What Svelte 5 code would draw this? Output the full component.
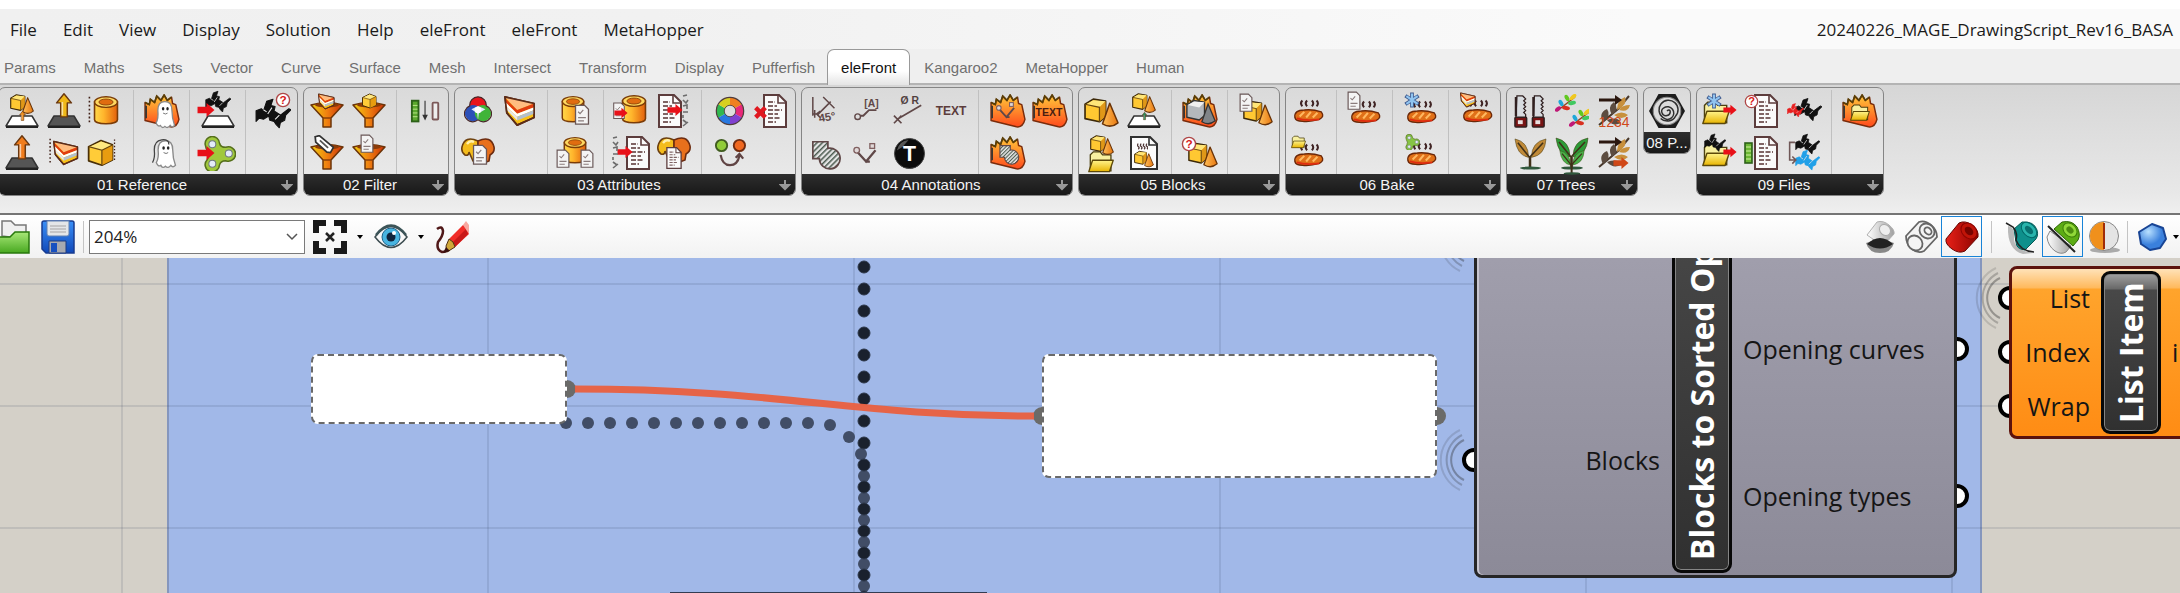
<!-- App.svelte -->
<script>
  // Menu and ribbon tabs
  const menus = ['File', 'Edit', 'View', 'Display', 'Solution', 'Help', 'eleFront', 'eleFront', 'MetaHopper'];
  const tabs = [
    'Params', 'Maths', 'Sets', 'Vector', 'Curve', 'Surface', 'Mesh', 'Intersect', 'Transform',
    'Display', 'Pufferfish', 'eleFront', 'Kangaroo2', 'MetaHopper', 'Human'
  ];
  let activeTab = $state('eleFront');
  let zoomLevel = $state('204%');
  let preview = $state('shaded');
  let drawMode = $state('selected');

  // An icon is a label and a list of parts: [symbol, x, y, size, colour]
  const icon = (label, ...parts) => ({ label, parts });

  // Every group is a list of columns, every column has one or two icons
  const panels = [
    {
      title: '01 Reference',
      groups: [
        [
          [icon('Reference geometry', ['plate', 0, 0, 34, '#ffffff'], ['blocks', 5, -2, 24], ['up', 12, 17, 11, '#f09020']),
           icon('Reference by layer', ['plate', 0, 0, 34, '#555555'], ['up', 3, -1, 28, '#f07c1c'])],
          [icon('Reference by name', ['plate', 0, 0, 34, '#555555'], ['up', 3, -1, 28, '#f0b818']),
           icon('Reference by key', ['cake', 6, 4, 26], ['dotline', -1, 1, 28])],
          [icon('Reference curve', ['cylinder', 2, 1, 30], ['dotline', -4, 1, 30]),
           icon('Reference box', ['cube', -3, 1, 30], ['dotline', 22, 2, 24, '#a02020'])]
        ],
        [
          [icon('Baked ghosts', ['flame', -1, 0, 36], ['ghost', 4, 5, 30]), icon('Ghost', ['ghost', 4, 2, 31], ['ghostedge', 2, 2, 31])]
        ],
        [
          [icon('Import to document', ['plate', 0, 0, 34, '#ffffff'], ['cat', 4, -5, 26, '#111111'], ['right', -4, 7, 18]),
           icon('Spin', ['spinner', 0, 0, 35, '#a0c83c'], ['right', -4, 8, 18])]
        ],
        [[icon('Unknown object', ['cat', -2, 2, 36, '#111111'], ['ask', 18, -2, 16])]]
      ]
    },
    {
      title: '02 Filter',
      groups: [
        [
          [icon('Filter by attribute', ['funnel', 0, 0, 34], ['cake', 8, -1, 17]), icon('Filter by name', ['funnel', 0, 0, 34], ['tag', 4, -1, 20])],
          [icon('Filter by type', ['funnel', 0, 0, 34], ['cube', 9, -2, 17]), icon('Filter by text', ['funnel', 0, 0, 34], ['page', 5, -2, 20])]
        ],
        [[icon('Compare values', ['bars', 2, 2, 32])]]
      ]
    },
    {
      title: '03 Attributes',
      groups: [
        [
          [icon('Colour', ['rgb', 3, 2, 28]), icon('Material attributes', ['helmet', 0, 0, 34], ['page', 8, 8, 22])],
          [icon('Attributes', ['cake', 1, 1, 32])]
        ],
        [[icon('Curve attributes', ['cylinder', 0, 1, 28], ['page', 12, 10, 22]), icon('Attribute pair', ['cylinder', 2, 0, 28], ['page', -6, 13, 20], ['page', 18, 13, 20])]],
        [
          [icon('Set attribute', ['cylinder', 4, 0, 30], ['page', -5, 8, 18], ['right', -1, 12, 14]), icon('Import keys', ['doc', 6, 0, 34], ['right', 2, 8, 16], ['code', -6, 0, 34])],
          [icon('Export keys', ['doc', -4, 0, 34], ['right', 10, 8, 16], ['code', 22, 0, 34]), icon('Material document', ['helmet', 0, -1, 34], ['doc', 6, 11, 22])]
        ],
        [
          [icon('Colour wheel', ['wheel', 2, 2, 30]), icon('Swap attributes', ['swap', 1, 1, 32])],
          [icon('Delete attributes', ['doc', 3, 0, 34], ['cross', -2, 11, 15])]
        ]
      ]
    },
    {
      title: '04 Annotations',
      groups: [
        [
          [icon('Angular dimension', ['angle', 2, 2, 32]), icon('Hatch', ['hatch', 2, 2, 32])],
          [icon('Leader', ['leader', 2, 2, 32]), icon('Polyline', ['poly', 2, 2, 32])],
          [icon('Radial dimension', ['radial', 1, 1, 32]), icon('Text dot', ['textdot', 1, 1, 33])],
          [icon('Text', ['text', 0, 0, 34, '#5c3c3c'])]
        ],
        [
          [icon('Bake leader', ['flame', 0, 0, 36], ['poly', 5, 4, 26]), icon('Bake hatch', ['flame', 0, 0, 36], ['hatch', 8, 7, 22])],
          [icon('Bake text', ['flame', 0, 0, 36], ['text', 2, 3, 30, '#4a1e12'])]
        ]
      ]
    },
    {
      title: '05 Blocks',
      groups: [
        [
          [icon('Block', ['blocks', -1, 1, 35]), icon('Block library', ['folder', 3, 12, 26], ['blocks', 5, -3, 24])],
          [icon('Place block', ['plate', 0, 0, 34, '#ffffff'], ['blocks', 5, -3, 24], ['up', 13, 18, 9, '#2c8a58']), icon('Block definition', ['sheet', 0, 0, 34], ['steam', 10, 7, 11], ['blocks', 7, 13, 20])]
        ],
        [[icon('Bake block', ['flame', -1, 0, 36], ['greyblocks', 3, 3, 30]), icon('Block info', ['blocks', 5, 4, 30], ['ask', -2, 0, 16])]],
        [[icon('Block attributes', ['blocks', 4, 4, 30], ['page', -3, -1, 20])]]
      ]
    },
    {
      title: '06 Bake',
      groups: [
        [[icon('Bake', ['bread', 1, 0, 32]), icon('Bake to folder', ['bread', 1, 2, 32], ['folder', -1, -2, 15])]],
        [[icon('Bake document', ['bread', 2, 1, 32], ['page', -4, -3, 20])]],
        [[icon('Bake frozen', ['bread', 2, 1, 32], ['snow', 0, -2, 16]), icon('Bake live', ['bread', 2, 1, 32], ['spinner', 0, -2, 16, '#86c444'])]],
        [[icon('Bake attributes', ['bread', 2, 0, 32], ['cake', 0, -2, 16])]]
      ]
    },
    {
      title: '07 Trees',
      groups: [
        [
          [icon('Prune', ['saws', 1, 1, 33]), icon('Sprout', ['sprout', 1, 1, 33, '#c08a38'])],
          [icon('Colour leaves', ['leaves', 0, 0, 34]), icon('Grow', ['sprout', 0, 0, 34, '#2c9c38'], ['sprout', 4, 13, 26, '#48b048'])],
          [icon('Number branches', ['branch', 0, 0, 34], ['digits', 0, 0, 34]), icon('Shift branches', ['branch', 0, 0, 34], ['right', 16, 19, 16, '#d04818'])]
        ]
      ]
    },
    { title: '08 P...', small: true, groups: [[[icon('Spiral', ['nut', -1, -1, 36])]]] },
    {
      title: '09 Files',
      groups: [
        [
          [icon('New file', ['folder', -1, 4, 28], ['snow', 3, -1, 16], ['right', 20, 9, 14]), icon('Open file', ['folder', -1, 4, 28], ['cat', 1, -4, 22, '#111111'], ['right', 20, 9, 14])],
          [icon('File info', ['doc', 4, 0, 34], ['ask', -1, 0, 15]), icon('File contents', ['doc', 4, 0, 34], ['greenbar', -1, 0, 34])],
          [icon('Replace object', ['cat', 7, 2, 28, '#111111'], ['cat', 0, 8, 17, '#e82020']), icon('Copy object', ['cat', 8, -4, 25, '#111111'], ['cat', 8, 12, 25, '#20a0e8'], ['hook', 0, 2, 30])]
        ],
        [[icon('Bake file', ['flame', -1, 0, 36], ['folder', 7, 8, 20])]]
      ]
    }
  ];

  // Dotted relationship wires on the canvas
  const darkDots = Array.from({ length: 16 }, (_, i) => [864, 9 + i * 22]);
  const softDots = [
    ...Array.from({ length: 12 }, (_, i) => [566 + i * 22, 165]),
    [830, 167], [849, 179], [861, 196],
    ...Array.from({ length: 6 }, (_, i) => [864, 218 + i * 22])
  ];

  // Wireless input marks: centre of the port
  const wireless = [[1474, -17], [1474, 202], [2010, 40]];
  const ports = [[1474, 202], [1957, 91], [1957, 238], [2010, 40], [2010, 94], [2010, 148]];
</script>

<!-- Shared drawings for the icons -->
<svg class="library" width="0" height="0" aria-hidden="true">
  <defs>
    <linearGradient id="gold"><stop offset="0" stop-color="#ffd94a" /><stop offset=".4" stop-color="#ffb52c" /><stop offset="1" stop-color="#e2600c" /></linearGradient>
    <linearGradient id="fire" x2="0" y2="1"><stop offset="0" stop-color="#ffc83a" /><stop offset="1" stop-color="#ff4a1c" /></linearGradient>
    <linearGradient id="cone"><stop offset="0" stop-color="#ffc05a" /><stop offset="1" stop-color="#e87810" /></linearGradient>
    <linearGradient id="funnelfill"><stop offset="0" stop-color="#f0d010" /><stop offset=".5" stop-color="#f08010" /><stop offset="1" stop-color="#c83008" /></linearGradient>
    <linearGradient id="yellow" x2="0" y2="1"><stop offset="0" stop-color="#fff48c" /><stop offset="1" stop-color="#e8b400" /></linearGradient>
    <radialGradient id="ball" cx=".35" cy=".3"><stop offset="0" stop-color="#b8e0ff" /><stop offset="1" stop-color="#3a80dc" /></radialGradient>
    <linearGradient id="redfill"><stop offset="0" stop-color="#e82018" /><stop offset="1" stop-color="#8c0400" /></linearGradient>
    <linearGradient id="greyfill"><stop offset="0" stop-color="#ffffff" /><stop offset="1" stop-color="#a0a0a0" /></linearGradient>
    <linearGradient id="bluefill" x2="0" y2="1"><stop offset="0" stop-color="#3a90f8" /><stop offset="1" stop-color="#1048b8" /></linearGradient>
    <linearGradient id="greenfill" x2="0" y2="1"><stop offset="0" stop-color="#a8e878" /><stop offset="1" stop-color="#48a820" /></linearGradient>
    <pattern id="stripes" width="4" height="4" patternUnits="userSpaceOnUse" patternTransform="rotate(45)">
      <rect width="4" height="4" fill="#e4e4e4" /><rect width="1.6" height="4" fill="#4c5c50" />
    </pattern>

    <symbol id="plate" viewBox="0 0 34 34"><path d="M7 22h20l6 10H1z" fill="currentColor" stroke="#333" stroke-width="1.5" stroke-linejoin="round" /><path d="M1 33h32" stroke="#222" stroke-width="2" /></symbol>
    <symbol id="up" viewBox="0 0 34 34"><path d="M17 1l9 11h-5v17h-8V12H8z" fill="currentColor" stroke="#6a3810" stroke-width="1.8" stroke-linejoin="round" /><path d="M15 11v16" stroke="#fff" stroke-opacity=".6" stroke-width="2" /></symbol>
    <symbol id="right" viewBox="0 0 34 34"><path d="M1 11h17V4l15 13-15 13v-7H1z" fill="currentColor" /></symbol>
    <symbol id="cross" viewBox="0 0 34 34"><path d="M6 6l22 22M28 6L6 28" stroke="#e01820" stroke-width="10" /></symbol>
    <symbol id="dotline" viewBox="0 0 34 34"><path d="M5 2v30" stroke="#402018" stroke-width="1.8" stroke-dasharray="2 2.5" /></symbol>
    <symbol id="cube" viewBox="0 0 34 34"><path d="M3 11L17 4l13 5v17l-12 6-15-5z" fill="#ffcc38" stroke="#4a3008" stroke-width="2" stroke-linejoin="round" /><path d="M4 11l14 4 11-6-12-4z" fill="#ffe880" /><path d="M18 15l12-6v17l-12 6z" fill="#e89c10" /><path d="M3 11l15 4v17M18 15l12-6" fill="none" stroke="#6a4810" stroke-width="1.4" /></symbol>
    <symbol id="blocks" viewBox="0 0 34 34"><path d="M1 9l8-5 12 2v15l-6 5-14-3z" fill="#ffc832" stroke="#3c2808" stroke-width="1.6" stroke-linejoin="round" /><path d="M2 9l13 3 6-6-12-1z" fill="#ffe678" /><path d="M15 12l6-6v15l-6 5z" fill="#e09818" /><path d="M1 9l14 3v14" fill="none" stroke="#6a4810" stroke-width="1.2" /><path d="M25 8l8 19q-7 6-15 1z" fill="url(#cone)" stroke="#6a3408" stroke-width="1.5" stroke-linejoin="round" /></symbol>
    <symbol id="greyblocks" viewBox="0 0 34 34"><path d="M1 9l8-5 12 2v15l-6 5-14-3z" fill="#b4b8bc" stroke="#333" stroke-width="1.6" stroke-linejoin="round" /><path d="M2 9l13 3 6-6-12-1z" fill="#f0f0f0" /><path d="M25 8l8 19q-7 6-15 1z" fill="#808488" stroke="#333" stroke-width="1.5" /></symbol>
    <symbol id="cylinder" viewBox="0 0 34 34"><path d="M4 8v20c0 6 26 6 26 0V8z" fill="url(#gold)" stroke="#7a3c08" stroke-width="1.8" /><ellipse cx="17" cy="8" rx="13" ry="6" fill="#ffd860" stroke="#7a3c08" stroke-width="1.6" /><ellipse cx="17" cy="8" rx="8" ry="3.4" fill="#e06c10" stroke="#8a4408" /></symbol>
    <symbol id="cake" viewBox="0 0 34 34"><path d="M1 2l31 7v15l-18 8L3 19z" fill="#f8c018" stroke="#5c2c18" stroke-width="1.8" stroke-linejoin="round" /><path d="M1 2l31 7-18 7z" fill="#ffbc80" /><path d="M1 3l13 13 18-7v4l-18 7L2 8z" fill="#e03c10" /><path d="M2 8l12 12 18-7v3l-18 7L2 12z" fill="#fff" /><path d="M14 23l18-7v4l-18 7z" fill="#b4c0cc" /><path d="M2 12l12 11v4L3 16z" fill="#e8e8e8" /><path d="M1 2l31 7v15l-18 8L3 19z" fill="none" stroke="#5c2c18" stroke-width="1.8" stroke-linejoin="round" /></symbol>
    <symbol id="flame" viewBox="0 0 34 34"><path d="M1 8l4 2 1-5 4 3 2-6 4 4 3-5 3 5 4-3 1 6 3 1 3 14q-2 8-8 7L1 25z" fill="url(#fire)" stroke="#7a2c0c" stroke-width="1.4" stroke-linejoin="round" /><path d="M1 8l4 2 1-5 4 3 2-6 4 4 3-5 3 5 4-3" fill="none" stroke="#5a4008" stroke-width="1.6" /><path d="M2 11v12" stroke="#333" stroke-width="1.6" /></symbol>
    <symbol id="ghost" viewBox="0 0 34 34"><path d="M8 27q3-5 2-14Q10 3 18 3t8 10q0 9 3 17-3 3-5 0-3 4-6 1-3 3-5-1-3 2-5-3z" fill="#fff" stroke="#8a8a8a" stroke-width="1.5" /><ellipse cx="16" cy="11" rx="1.4" ry="2" fill="#222" /><ellipse cx="21" cy="11" rx="1.4" ry="2" fill="#222" /><path d="M16 16q3 2 5 0" fill="none" stroke="#666" /></symbol>
    <symbol id="ghostedge" viewBox="0 0 34 34"><path d="M6 27q3-5 2-14Q8 3 16 2t8 5" fill="none" stroke="#444" stroke-width="1.4" /></symbol>
    <symbol id="cat" viewBox="0 0 34 34"><path d="M1 14l5-2 2 2 3-9 6-2-2 6 4 1-1 4 6 4 8-6 2 1-5 5-1 5-4 2-1 5-3-3-2-3-4-1-1-4-5 3-4-1-3 3z" fill="currentColor" stroke="currentColor" stroke-linejoin="round" /><path d="M12 17l4-6M19 22l4-4M8 13l3 2" stroke="#e8e8e8" stroke-width="1" /></symbol>
    <symbol id="ask" viewBox="0 0 34 34"><circle cx="17" cy="17" r="14" fill="#fff" stroke="#b04848" stroke-width="3" /><text x="17" y="26" text-anchor="middle" font-family="Liberation Sans, sans-serif" font-size="25" font-weight="700" fill="#d81818">?</text></symbol>
    <symbol id="spinner" viewBox="0 0 34 34"><path d="M4 8a7 7 0 0 1 14-1q1 4 6 4a7 7 0 1 1 0 13q-5 0-6 4a7 7 0 1 1-12-5q3-5-1-11z" fill="currentColor" stroke="#56701c" stroke-width="1.5" /><g fill="#e4ecf8" stroke="#707880"><circle cx="11" cy="8" r="3.4" /><circle cx="27" cy="17" r="3.4" /><circle cx="11" cy="27" r="3.4" /></g></symbol>
    <symbol id="funnel" viewBox="0 0 34 34"><path d="M1 11q16-5 32 0L21 24v9h-8v-9z" fill="url(#funnelfill)" stroke="#6c3408" stroke-width="1.5" stroke-linejoin="round" /><ellipse cx="17" cy="11" rx="12" ry="2.5" fill="#8c3c08" /><path d="M13 24h8" stroke="#8c4008" stroke-width="1.4" /></symbol>
    <symbol id="tag" viewBox="0 0 34 34"><path d="M2 3l7-2 24 20-5 9-6-1L3 12z" fill="#fff" stroke="#333" stroke-width="3" /><path d="M10 9l14 13" stroke="#555" stroke-width="3" /></symbol>
    <symbol id="page" viewBox="0 0 34 34"><path d="M7 2h14l6 6v23H7z" fill="#f4f4f4" stroke="#6a5858" stroke-width="2" /><path d="M11 12l3 3 5-6M11 21h12M11 26h9" fill="none" stroke="#8a7c7c" stroke-width="1.8" /></symbol>
    <symbol id="doc" viewBox="0 0 34 34"><path d="M6 1h15l7 7v25H6z" fill="#fafafa" stroke="#5c3c3c" stroke-width="2" /><path d="M20 1v8h8" fill="none" stroke="#5c3c3c" stroke-width="1.6" /><path d="M10 8h7M10 12h9M10 16h14M10 20h10M10 24h13M10 28h8" stroke="#806464" stroke-width="1.8" stroke-dasharray="5 1.5" /></symbol>
    <symbol id="sheet" viewBox="0 0 34 34"><path d="M4 1h19l7 7v25H4z" fill="#fcfcfc" stroke="#303030" stroke-width="2" /><path d="M22 1v8h8" fill="none" stroke="#303030" stroke-width="1.6" /></symbol>
    <symbol id="code" viewBox="0 0 34 34"><path d="M4 2l4-1M4 6l3 3 2-3M4 12l4-1v4M4 18h5M4 21v3M4 26l4 3M4 32l5-4" fill="none" stroke="#6c6c6c" stroke-width="1.6" /></symbol>
    <symbol id="bars" viewBox="0 0 34 34"><rect x="2" y="5" width="7" height="22" fill="#5aa82c" stroke="#2c6018" stroke-width="2" /><path d="M3 10h5M3 14h5M3 18h5M3 22h5" stroke="#c0e890" /><path d="M16 5v17" stroke="#777" stroke-width="2" /><path d="M13 20l3 6 3-6z" fill="#333" /><rect x="24" y="7" width="6" height="18" rx="1" fill="#eee" stroke="#7c5858" stroke-width="2" /></symbol>
    <symbol id="greenbar" viewBox="0 0 34 34"><rect x="1" y="7" width="7" height="20" fill="#6cb834" stroke="#2c6018" stroke-width="1.6" /><path d="M2 11h5M2 15h5M2 19h5M2 23h5" stroke="#d0f0a0" /></symbol>
    <symbol id="rgb" viewBox="0 0 34 34"><circle cx="17" cy="11" r="10" fill="#e8141c" /><circle cx="11" cy="21" r="10" fill="#2c50b8" /><circle cx="23" cy="21" r="10" fill="#40b438" /><path d="M17 12l-8 4 7 5 1 8 1-8 8-5z" fill="#dfe8ff" /><circle cx="17" cy="17" r="4" fill="#fff" /><path d="M17 1a10 10 0 0 1 10 11 10 10 0 1 1-10 17 10 10 0 1 1-10-17A10 10 0 0 1 17 1z" fill="none" stroke="#482828" stroke-width="1.4" /></symbol>
    <symbol id="helmet" viewBox="0 0 34 34"><path d="M17 5Q4-1 1 11q-1 5 3 8 4 1 4-3l4 9h5z" fill="#f4bc1c" stroke="#6c4010" stroke-width="1.6" /><path d="M17 5q13-6 16 6 1 5-4 8l-1 6-5 2-6-2z" fill="#e8701c" stroke="#6c2c10" stroke-width="1.6" /><path d="M6 8q3-4 7-2" stroke="#fff0b0" stroke-width="2.4" fill="none" /></symbol>
    <symbol id="wheel" viewBox="0 0 34 34"><g fill="none" stroke-width="9"><path d="M17 6a11 11 0 0 1 9.5 5.5" stroke="#f08020" /><path d="M26.5 11.5a11 11 0 0 1 0 11" stroke="#e82878" /><path d="M26.5 22.5A11 11 0 0 1 17 28" stroke="#8040d0" /><path d="M17 28a11 11 0 0 1-9.5-5.5" stroke="#2878e0" /><path d="M7.5 22.5a11 11 0 0 1 0-11" stroke="#30b850" /><path d="M7.5 11.5A11 11 0 0 1 17 6" stroke="#d8d020" /></g><circle cx="17" cy="17" r="15.5" fill="none" stroke="#503c3c" stroke-width="1.4" /><circle cx="17" cy="17" r="6.5" fill="none" stroke="#504040" /></symbol>
    <symbol id="swap" viewBox="0 0 34 34"><circle cx="8" cy="9" r="6" fill="#90cc38" stroke="#405c20" stroke-width="2" /><circle cx="27" cy="9" r="6" fill="#f06820" stroke="#702c10" stroke-width="2" /><path d="M7 19q2 11 10 11t10-10M23 22l4-4 4 5" fill="none" stroke="#604444" stroke-width="2.4" /></symbol>
    <symbol id="angle" viewBox="0 0 34 34"><path d="M3 1v20M3 19h6l13-13M14 1l12 12M5 15v8M7 19l4-3M7 19l4 4" fill="none" stroke="#604848" stroke-width="1.6" /><text x="10" y="28" font-family="Liberation Sans, sans-serif" font-size="12" font-weight="700" fill="#604848" transform="rotate(-10 10 28)">45°</text></symbol>
    <symbol id="leader" viewBox="0 0 34 34"><circle cx="6" cy="22" r="3" fill="#ddd" stroke="#604848" stroke-width="1.5" /><path d="M9 21h3l6-6h8" fill="none" stroke="#604848" stroke-width="2" /><text x="13" y="12" font-family="Liberation Sans, sans-serif" font-size="11" font-weight="700" fill="#604848">[A]</text></symbol>
    <symbol id="poly" viewBox="0 0 34 34"><path d="M5 14l10 11 10-12M14 25h5" fill="none" stroke="#604848" stroke-width="2.4" /><circle cx="5" cy="13" r="3" fill="#e0d8d8" stroke="#806060" stroke-width="1.4" /><rect x="19" y="6" width="5" height="5" fill="#e0d8d8" stroke="#806060" stroke-width="1.4" /></symbol>
    <symbol id="radial" viewBox="0 0 34 34"><path d="M4 26L30 11M1 22l8 8M9 22l-8 8" stroke="#604848" stroke-width="1.8" /><text x="8" y="10" font-family="Liberation Sans, sans-serif" font-size="11" font-weight="700" fill="#504040">Ø R</text></symbol>
    <symbol id="text" viewBox="0 0 34 34"><text x="17" y="21" text-anchor="middle" font-family="Liberation Sans, sans-serif" font-size="12" font-weight="700" fill="currentColor">TEXT</text></symbol>
    <symbol id="hatch" viewBox="0 0 34 34"><path d="M3 4h16v7a11 11 0 1 1-9 11H3z" fill="url(#stripes)" stroke="#604848" stroke-width="1.8" /></symbol>
    <symbol id="textdot" viewBox="0 0 34 34"><circle cx="17" cy="17" r="15.5" fill="#0c0c0c" stroke="#444" /><path d="M4 14Q6 4 16 3L10 10z" fill="#888" opacity=".6" /><text x="17" y="25" text-anchor="middle" font-family="Liberation Sans, sans-serif" font-size="22" font-weight="700" fill="#fff">T</text></symbol>
    <symbol id="steam" viewBox="0 0 34 34"><path d="M4 2q-5 5 0 9t0 8M13 2q-5 5 0 9t0 8M22 2q-5 5 0 9t0 8M31 2q-5 5 0 9t0 8" fill="none" stroke="#503838" stroke-width="4" /></symbol>
    <symbol id="bread" viewBox="0 0 34 34"><path d="M10 7q-3 3 0 6M15 7q-3 3 0 6M20 7q3 3 0 6M25 7q3 3 0 6" fill="none" stroke="#402424" stroke-width="2.2" /><path d="M2 25q-1-8 10-8 9-1 18 2 4 5-2 8-10 3-18 2-7 0-8-4z" fill="#e07018" stroke="#6c2808" stroke-width="1.5" /><path d="M7 24l5-5M14 25l5-6M21 25l5-5" stroke="#ffb860" stroke-width="2.2" /><path d="M4 26q10 3 24 1" stroke="#e02c10" stroke-width="2" fill="none" /></symbol>
    <symbol id="snow" viewBox="0 0 34 34"><path d="M17 1v32M3 8l28 18M31 8L3 26" stroke="#405c90" stroke-width="8" /><path d="M17 3v28M5 9l24 16M29 9L5 25" stroke="#90c4f0" stroke-width="4.5" /></symbol>
    <symbol id="folder" viewBox="0 0 34 34"><path d="M3 30V9l4-4h9l3 4h11v21z" fill="#f8f0a0" stroke="#4c4010" stroke-width="1.7" /><path d="M1 31l5-15h27l-5 15z" fill="url(#yellow)" stroke="#5c4808" stroke-width="1.7" stroke-linejoin="round" /></symbol>
    <symbol id="saws" viewBox="0 0 34 34"><g id="saw" stroke="#302020"><path d="M3 1h6l3 3-2 2 2 2-2 2 2 2-2 2 2 2-2 2 2 2v4H2z" fill="#d8dce0" stroke-width="1.3" /><path d="M2 2v20" stroke-width="2.4" /><rect x="1" y="23" width="12" height="10" rx="1" fill="#781414" stroke-width="1.6" /><rect x="4" y="26" width="5" height="4" fill="#e8e0e0" stroke="none" /></g><use href="#saw" x="18" /></symbol>
    <symbol id="sprout" viewBox="0 0 34 34"><path d="M15 21Q3 19 1 2q14 3 14 19zM18 21q0-16 15-19-1 17-15 19z" fill="currentColor" stroke="#403810" stroke-opacity=".5" /><path d="M4 6l12 15v11M30 6L17 20v12" stroke="#403018" stroke-width="1.6" fill="none" /><ellipse cx="17" cy="32" rx="11" ry="1.6" fill="#30583c" /></symbol>
    <symbol id="leaves" viewBox="0 0 34 34"><g id="twig"><path d="M2 17L20 3" stroke="#904820" stroke-width="1.5" /><ellipse cx="3" cy="15" rx="3.5" ry="2" fill="#c01878" transform="rotate(-40 3 15)" /><ellipse cx="6" cy="9" rx="3.5" ry="2" fill="#20a8d8" transform="rotate(60 6 9)" /><ellipse cx="12" cy="4" rx="3.5" ry="2" fill="#60c820" transform="rotate(60 12 4)" /><ellipse cx="18" cy="3" rx="4" ry="2" fill="#f0c820" transform="rotate(-40 18 3)" /><ellipse cx="11" cy="14" rx="4" ry="2" fill="#d83020" transform="rotate(10 11 14)" /><ellipse cx="17" cy="9" rx="4" ry="2" fill="#40c860" transform="rotate(-10 17 9)" /></g><use href="#twig" x="14" y="15" /></symbol>
    <symbol id="branch" viewBox="0 0 34 34"><path d="M2 31L21 15 32 2" stroke="#48382c" stroke-width="2" fill="none" /><path d="M6 28q-5-9 4-13 5 7-4 13zM15 21q-5-8 2-13 6 7-2 13zM10 26q11-4 14 3-8 4-14-3z" fill="#5c4c40" /><path d="M20 16q0-10 8-13 3 8-8 13zM22 16q3-5 11-5-2 8-11 5zM17 21q8-5 14 0-6 6-14 0z" fill="#c8903c" /><path d="M2 6h18" stroke="#2c1810" stroke-width="3" /><path d="M18 1l7 5-7 5z" fill="#2c1810" /></symbol>
    <symbol id="digits" viewBox="0 0 34 34"><text x="17" y="33" text-anchor="middle" font-family="Liberation Sans, sans-serif" font-size="14" fill="#d04818">1234</text></symbol>
    <symbol id="nut" viewBox="0 0 34 34"><path d="M9 1h16l9 16-9 16H9L0 17z" fill="#1c1c1c" /><circle cx="17" cy="17" r="13" fill="#dcdcdc" stroke="#888" /><path d="M17 17q2-2 3 0a4 4 0 1 1-6-3 6 6 0 1 1-1 9 9 9 0 1 1 12-1 9 9 0 0 1-14 2" fill="none" stroke="#303030" stroke-width="1.4" /></symbol>
    <symbol id="hook" viewBox="0 0 34 34"><path d="M9 5H3v20h6M6 21l4 4-4 4" fill="none" stroke="#705858" stroke-width="1.8" /></symbol>
  </defs>
</svg>

{#snippet drawIcon(parts)}
  <svg class="icon" viewBox="0 0 34 34" aria-hidden="true">
    {#each parts as [name, x, y, size, colour = '#e81018']}
      <use href={`#${name}`} {x} {y} width={size} height={size} color={colour} />
    {/each}
  </svg>
{/snippet}

<div class="app">
  <header class="menu-bar">
    <nav aria-label="Menu">
      {#each menus as menu}
        <button type="button">{menu}</button>
      {/each}
    </nav>
    <span class="document">20240226_MAGE_DrawingScript_Rev16_BASA</span>
  </header>

  <div class="tabs" role="tablist">
    {#each tabs as tab}
      <button type="button" role="tab" class:active={tab === activeTab} aria-selected={tab === activeTab} onclick={() => (activeTab = tab)}>{tab}</button>
    {/each}
  </div>

  <div class="ribbon">
    {#each panels as panel}
      <section class="panel" class:small={panel.small}>
        <div class="groups">
          {#each panel.groups as group}
            <div class="group">
              {#each group as column}
                <div class="column">
                  {#each column as item}
                    <button type="button" aria-label={item.label}>{@render drawIcon(item.parts)}</button>
                  {/each}
                </div>
              {/each}
            </div>
          {/each}
        </div>
        <h2>
          <span>{panel.title}</span>
          {#if !panel.small}
            <svg width="12" height="12" viewBox="0 0 12 12" aria-hidden="true"><path d="M6 1v7M2 6h8L6 10z" fill="#999" stroke="#999" stroke-width="2" /></svg>
          {/if}
        </h2>
      </section>
    {/each}
  </div>

  <div class="toolbar">
    <button type="button" class="tool open" aria-label="Open file">
      <svg viewBox="0 0 34 34"><path d="M6 16V1h9l4 4h11v14z" fill="#f0f0f0" stroke="#777" stroke-width="1.5" /><path d="M1 33V17h13l5-5h14v21z" fill="url(#greenfill)" stroke="#28780c" stroke-width="1.5" /></svg>
    </button>
    <button type="button" class="tool save" aria-label="Save file">
      <svg viewBox="0 0 34 34"><path d="M1 3q0-2 2-2h28q2 0 2 2v30H5l-4-4z" fill="url(#bluefill)" stroke="#183c90" stroke-width="1.5" /><path d="M6 1h22v13q0 2-2 2H8q-2 0-2-2z" fill="#e4e6e8" stroke="#6080b0" /><path d="M9 6h16M9 9h16M9 12h16" stroke="#bbb" stroke-width="1.5" /><path d="M8 21h17v12H8z" fill="#a8aab0" stroke="#203c80" /><path d="M10 23h6v9h-6z" fill="#1850c0" /></svg>
    </button>
    <span class="divider"></span>
    <label class="zoom">
      <select aria-label="Zoom" bind:value={zoomLevel}>
        <option>50%</option>
        <option>100%</option>
        <option>204%</option>
      </select>
      <svg width="12" height="8" viewBox="0 0 12 8" aria-hidden="true"><path d="M1 1l5 5 5-5" fill="none" stroke="#555" stroke-width="1.5" /></svg>
    </label>
    <button type="button" class="tool" aria-label="Zoom extents">
      <svg viewBox="0 0 34 34"><path d="M3 13V3h10M21 3h10v10M31 21v10H21M13 31H3V21" fill="none" stroke="#1a1a1a" stroke-width="6" /><path d="M13 13l8 8M21 13l-8 8" stroke="#222" stroke-width="2.5" /></svg>
    </button>
    <button type="button" class="drop" aria-label="Zoom options"></button>
    <button type="button" class="tool" aria-label="Named views">
      <svg viewBox="0 0 34 34"><path d="M1 17Q17-4 33 17 17 38 1 17z" fill="#f8f8f8" stroke="#3c4c50" stroke-width="1.5" /><path d="M2 15Q17-4 32 15" fill="none" stroke="#3c5458" stroke-width="2.5" /><circle cx="17" cy="17" r="9" fill="#48b4e0" stroke="#1c6088" /><circle cx="17" cy="17" r="4.5" fill="#10243c" /><circle cx="20" cy="13" r="2" fill="#fff" /></svg>
    </button>
    <button type="button" class="drop" aria-label="View options"></button>
    <button type="button" class="tool" aria-label="Sketch">
      <svg viewBox="0 0 34 34"><path d="M2 9q5-4 6 2 0 5-5 11-2 8 4 10 5 0 8-4" fill="none" stroke="#501818" stroke-width="2.5" /><path d="M14 19L28 5q5 1 6 9L20 27z" fill="#f02c28" /><path d="M18 22L31 9l2 5-13 13z" fill="#c81818" /><path d="M28 5l3-4 3 4v9z" fill="#f8a8a0" /><path d="M14 19q5 2 6 8l-8 5-1-6z" fill="#d0a838" stroke="#503010" /><path d="M11 27l4 4-7 2z" fill="#381010" /></svg>
    </button>

    <div class="display-tools">
      <button type="button" class="tool" class:on={preview === 'off'} aria-label="Do not draw preview" onclick={() => (preview = 'off')}>
        <svg viewBox="0 0 34 34"><path d="M4 15L14 2q6-2 12 3t5 9L20 26z" fill="url(#greyfill)" stroke="#b0b0b0" /><ellipse cx="22" cy="10" rx="6" ry="5" fill="#eee" stroke="#aaa" transform="rotate(45 22 10)" /><path d="M3 23q14-6 28 0-3 10-14 10T3 23z" fill="#888" /><path d="M4 24q13-12 26 0-13 9-26 0z" fill="#222" /></svg>
      </button>
      <button type="button" class="tool" class:on={preview === 'wire'} aria-label="Wireframe preview" onclick={() => (preview = 'wire')}>
        <svg viewBox="0 0 34 34"><g fill="#f4f4f4" stroke="#666" stroke-width="1.8"><path d="M2 16L15 2q6-2 12 3t6 12L20 31q-6 3-12-2T2 16z" /><ellipse cx="23" cy="11" rx="8" ry="7" transform="rotate(45 23 11)" /><ellipse cx="11" cy="23" rx="8" ry="7" transform="rotate(45 11 23)" /><ellipse cx="24" cy="11" rx="4" ry="3" transform="rotate(45 24 11)" /></g></svg>
      </button>
      <button type="button" class="tool" class:on={preview === 'shaded'} aria-label="Shaded preview" onclick={() => (preview = 'shaded')}>
        <svg viewBox="0 0 34 34"><path d="M1 19L14 3q6-3 13 2t6 12L20 31q-6 3-13-2T1 19z" fill="url(#redfill)" stroke="#680400" /><ellipse cx="24" cy="11" rx="9" ry="7" fill="#c01408" stroke="#8c0400" transform="rotate(45 24 11)" /><ellipse cx="24" cy="11" rx="5" ry="3.5" fill="#780400" transform="rotate(45 24 11)" /></svg>
      </button>
      <span class="divider wide"></span>
      <button type="button" class="tool" class:on={drawMode === 'all'} aria-label="Draw all" onclick={() => (drawMode = 'all')}>
        <svg viewBox="0 0 34 34"><path d="M3 6q7 1 6 11-1 13 19 16l-10 1Q2 30 3 6z" fill="#909090" opacity=".6" /><path d="M9 9l8-7q12-1 15 8 2 7-3 11L20 30q-9-1-9-8z" fill="#0e908c" stroke="#045854" /><ellipse cx="24" cy="10" rx="9" ry="6" fill="#28b4ac" stroke="#066" transform="rotate(45 24 10)" /><ellipse cx="24" cy="10" rx="5" ry="3" fill="#087070" transform="rotate(45 24 10)" /><path d="M1 3l7 4q5 6 3 13 4 11 18 12" fill="none" stroke="#222" stroke-width="1.5" /></svg>
      </button>
      <button type="button" class="tool" class:on={drawMode === 'selected'} aria-label="Draw selected" onclick={() => (drawMode = 'selected')}>
        <svg viewBox="0 0 34 34"><path d="M4 11L1 17q1 9 8 14 6 4 11 1l5-6z" fill="url(#greyfill)" stroke="#888" /><path d="M8 9l8-7q10-2 15 5 4 7 1 13l-5 6z" fill="#5cac14" stroke="#2c6404" /><ellipse cx="24" cy="10" rx="8" ry="6" fill="#90d838" stroke="#3c7c08" transform="rotate(45 24 10)" /><ellipse cx="24" cy="10" rx="4" ry="3" fill="#4c8c10" transform="rotate(45 24 10)" /><path d="M2 6l27 26" stroke="#222" stroke-width="2" /></svg>
      </button>
      <button type="button" class="tool" class:on={drawMode === 'split'} aria-label="Preview quality" onclick={() => (drawMode = 'split')}>
        <svg viewBox="0 0 34 34"><ellipse cx="18" cy="30" rx="15" ry="3" fill="#aaa" /><circle cx="17" cy="16" r="14.5" fill="#e4e4e4" stroke="#888" /><path d="M17 2a14 14 0 0 0 0 28z" fill="#f0901c" /><path d="M17 3v26" stroke="#a02c08" stroke-width="2" /></svg>
      </button>
      <span class="divider narrow"></span>
      <button type="button" class="tool" aria-label="Preview mesh">
        <svg viewBox="0 0 34 34"><path d="M17 4l11 4 3 11-6 9-10 2-9-6-2-12z" fill="url(#ball)" stroke="#184494" stroke-width="2" stroke-linejoin="round" /></svg>
      </button>
      <button type="button" class="drop edge" aria-label="Mesh options"></button>
    </div>
  </div>

  <main class="canvas">
    <div class="paper"></div>
    <svg class="wires" aria-hidden="true">
      {#each wireless as [x, y]}
        <g fill="none" stroke="#222" stroke-width="2">
          <path d={`M${x - 10} ${y - 20}a22 22 0 0 0 0 40`} stroke-opacity=".35" />
          <path d={`M${x - 12} ${y - 25}a28 28 0 0 0 0 50`} stroke-opacity=".25" />
          <path d={`M${x - 14} ${y - 30}a33 33 0 0 0 0 60`} stroke-opacity=".15" />
        </g>
      {/each}
      {#each ports as [cx, cy]}
        <circle {cx} {cy} r="10" fill="#fff" stroke="#000" stroke-width="4" />
      {/each}
      {#each softDots as [cx, cy]}
        <circle {cx} {cy} r="6" fill="#414d66" />
      {/each}
      {#each darkDots as [cx, cy]}
        <circle {cx} {cy} r="6" fill="#1a212d" stroke="#2c3648" />
      {/each}
      <g fill="#6b6b69">
        <circle cx="567" cy="131" r="9" />
        <circle cx="1042" cy="158" r="9" />
        <circle cx="1437" cy="158" r="9" />
      </g>
      <path d="M575 131C780 131 850 158 1034 158" fill="none" stroke="#e86142" stroke-width="7" stroke-opacity=".97" />
      <path d="M670 335h317" stroke="#333c52" stroke-width="2" />
    </svg>

    <div class="note first"></div>
    <div class="note second"></div>

    <article class="node cluster">
      <div class="inputs"><span>Blocks</span></div>
      <h3>Blocks to Sorted Openings</h3>
      <div class="outputs"><span>Opening curves</span><span>Opening types</span></div>
    </article>

    <article class="node list-item">
      <div class="inputs"><span>List</span><span>Index</span><span>Wrap</span></div>
      <h3>List Item</h3>
      <div class="outputs"><span>i</span></div>
    </article>
  </main>
</div>

<style>
  :global(body) {
    margin: 0;
    overflow: hidden;
  }

  button {
    margin: 0;
    padding: 0;
    border: none;
    background: none;
    font: inherit;
    color: inherit;
  }

  .library {
    position: absolute;
  }

  .app {
    display: flex;
    flex-direction: column;
    height: 100vh;
    background: #efefef;
    font-family: "Liberation Sans", Arial, sans-serif;
    font-size: 15px;
  }

  /* Menu bar */
  .menu-bar {
    display: flex;
    align-items: center;
    justify-content: space-between;
    box-sizing: border-box;
    height: 49px;
    padding: 2px 7px 0 10px;
    border-top: 9px solid #ffffff;
    background: linear-gradient(90deg, #f0f0f0, #f1f1f1 30%, #fafafa 75%);
    font-family: "Open Sans", "Noto Sans", sans-serif;
    font-size: 17px;
    line-height: 24px;
    color: #1a1a1a;
    white-space: nowrap;
  }

  .menu-bar nav {
    display: flex;
    gap: 26px;
  }

  /* Ribbon tabs */
  .tabs {
    display: flex;
    height: 34px;
    padding-left: 4px;
    border-bottom: 2px solid #b4b4b4;
    color: #707070;
  }

  .tabs button {
    margin-right: 28px;
    padding-top: 4px;
    line-height: 30px;
  }

  .tabs button.active {
    margin: 0 14px 0 -16px;
    padding: 0 13px;
    height: 36px;
    border: 1px solid #999999;
    border-bottom: none;
    border-radius: 7px 7px 0 0;
    background: linear-gradient(#ffffff 60%, #e4e4e4);
    color: #111111;
  }

  /* Ribbon panels */
  .ribbon {
    display: flex;
    align-items: flex-start;
    gap: 5px;
    margin-left: -2px;
    padding: 2px 0 17px;
    background: linear-gradient(#d6d6d6, #e8e8e8 85%, #efefef);
  }

  .panel {
    flex: none;
    border: 1px solid #858585;
    border-radius: 7px;
    background: linear-gradient(#dadada, #ececec);
    overflow: hidden;
  }

  .groups {
    display: flex;
    padding: 2px 2px 0;
  }

  .group {
    display: flex;
  }

  .group + .group {
    margin-left: 6px;
    padding-left: 7px;
    border-left: 1px solid #c0c0c0;
  }

  .column {
    width: 42px;
    height: 84px;
  }

  .small .column {
    height: 42px;
  }

  .column button {
    display: flex;
    align-items: center;
    justify-content: center;
    width: 42px;
    height: 42px;
  }

  .icon {
    width: 34px;
    height: 34px;
    overflow: visible;
  }

  .panel h2 {
    display: flex;
    align-items: center;
    margin: 0;
    padding: 0 4px;
    height: 21px;
    background: linear-gradient(#2e2e2e, #181818);
    color: #f4f4f4;
    font-size: 15px;
    font-weight: 400;
    line-height: 20px;
  }

  .panel.small h2 {
    padding: 0;
  }

  .panel h2 span {
    flex: 1;
    text-align: center;
  }

  /* Canvas toolbar */
  .toolbar {
    display: flex;
    align-items: center;
    height: 43px;
    border-top: 2px solid #757575;
    background: linear-gradient(#ffffff, #f2f2f2);
  }

  .tool {
    display: flex;
    align-items: center;
    justify-content: center;
    flex: none;
    box-sizing: border-box;
    width: 41px;
    height: 41px;
  }

  .tool svg {
    width: 34px;
    height: 34px;
  }

  .tool.on {
    border: 1px solid #1883d7;
  }

  .open {
    margin-left: -8px;
  }

  .save {
    margin-left: 4px;
  }

  .divider {
    width: 1px;
    height: 32px;
    margin: 0 5px;
    background: #c4c4c4;
  }

  .divider.wide {
    margin: 0 9px;
  }

  .divider.narrow {
    margin: 0 3px;
  }

  .zoom {
    display: flex;
    align-items: center;
    box-sizing: border-box;
    width: 216px;
    height: 34px;
    margin-right: 4px;
    padding-right: 6px;
    border: 1px solid #7a7a7a;
    background: #ffffff;
  }

  .zoom select {
    flex: 1;
    padding: 0 4px;
    border: none;
    outline: none;
    appearance: none;
    background: none;
    color: #222222;
    font-family: "Open Sans", "Noto Sans", sans-serif;
    font-size: 17px;
  }

  .drop {
    width: 20px;
    height: 40px;
  }

  .drop.edge {
    width: 8px;
  }

  .drop::before {
    content: "";
    display: block;
    width: 0;
    margin: 0 auto;
    border: 3px solid transparent;
    border-top: 4px solid #000000;
    border-bottom: none;
  }

  .display-tools {
    display: flex;
    align-items: center;
    margin-left: auto;
  }

  /* Node canvas */
  .canvas {
    position: relative;
    flex: 1;
    overflow: hidden;
    background: #d4d0c8;
    font-family: "Open Sans", "Noto Sans", sans-serif;
    font-size: 25px;
    color: #151515;
  }

  .paper {
    position: absolute;
    top: -20px;
    bottom: -20px;
    left: 167px;
    width: 1811px;
    border: 2px solid #8596bd;
    background: #a1b8e8;
  }

  .canvas::before {
    content: "";
    position: absolute;
    inset: 0;
    z-index: 1;
    background:
      linear-gradient(90deg, rgba(40, 50, 80, 0.12) 2px, transparent 2px) 121px 0 / 366px 100%,
      linear-gradient(rgba(40, 50, 80, 0.12) 2px, transparent 2px) 0 25px / 100% 122px;
  }

  .wires {
    position: absolute;
    inset: 0;
    z-index: 2;
    width: 100%;
    height: 100%;
  }

  .note,
  .node {
    position: absolute;
    z-index: 3;
    box-sizing: border-box;
  }

  .note {
    top: 96px;
    border: 2px dashed #696969;
    border-radius: 7px;
    background: #ffffff;
  }

  .first {
    left: 311px;
    width: 256px;
    height: 70px;
  }

  .second {
    left: 1042px;
    width: 395px;
    height: 124px;
  }

  .node {
    display: grid;
    border-radius: 8px;
    line-height: 36px;
    white-space: nowrap;
  }

  .node h3 {
    box-sizing: border-box;
    width: 60px;
    margin: 0;
    border: 3px solid #080808;
    border-radius: 9px;
    background: linear-gradient(0deg, #505050, #303030);
    box-shadow: inset 0 0 0 1px #858585;
    color: #ffffff;
    font-size: 32px;
    font-weight: 700;
    line-height: 54px;
    writing-mode: vertical-rl;
    transform: rotate(180deg);
  }

  .inputs,
  .outputs {
    display: flex;
    flex-direction: column;
  }

  .inputs {
    align-items: flex-end;
  }

  .cluster {
    top: -160px;
    left: 1474px;
    width: 483px;
    height: 480px;
    padding: 0 2px 2px;
    grid-template-columns: 1fr 60px 220px;
    border: 3px solid #262626;
    background: linear-gradient(#aaa8b6, #8c8a98);
    box-shadow: inset 2px 0 0 #c8c6d0;
  }

  .cluster h3 {
    padding-top: 10px;
  }

  .cluster .inputs {
    padding: 341px 12px 0 0;
  }

  .cluster .outputs {
    gap: 111px;
    padding: 230px 0 0 11px;
  }

  .list-item {
    top: 8px;
    left: 2009px;
    width: 300px;
    height: 173px;
    padding: 2px;
    grid-template-columns: 87px 60px 1fr;
    border: 3px solid #5c120c;
    background: linear-gradient(#ffe2b8, #ffb95c 19px, #ffa42c 20px, #ff8c14);
  }

  .list-item h3 {
    background: linear-gradient(0deg, #a0a0a0, #686868 15px, #484848 16px, #303030);
    text-align: center;
  }

  .list-item .inputs {
    gap: 18px;
    padding: 9px 11px 0 0;
  }

  .list-item .outputs {
    padding: 63px 0 0 11px;
  }
</style>
